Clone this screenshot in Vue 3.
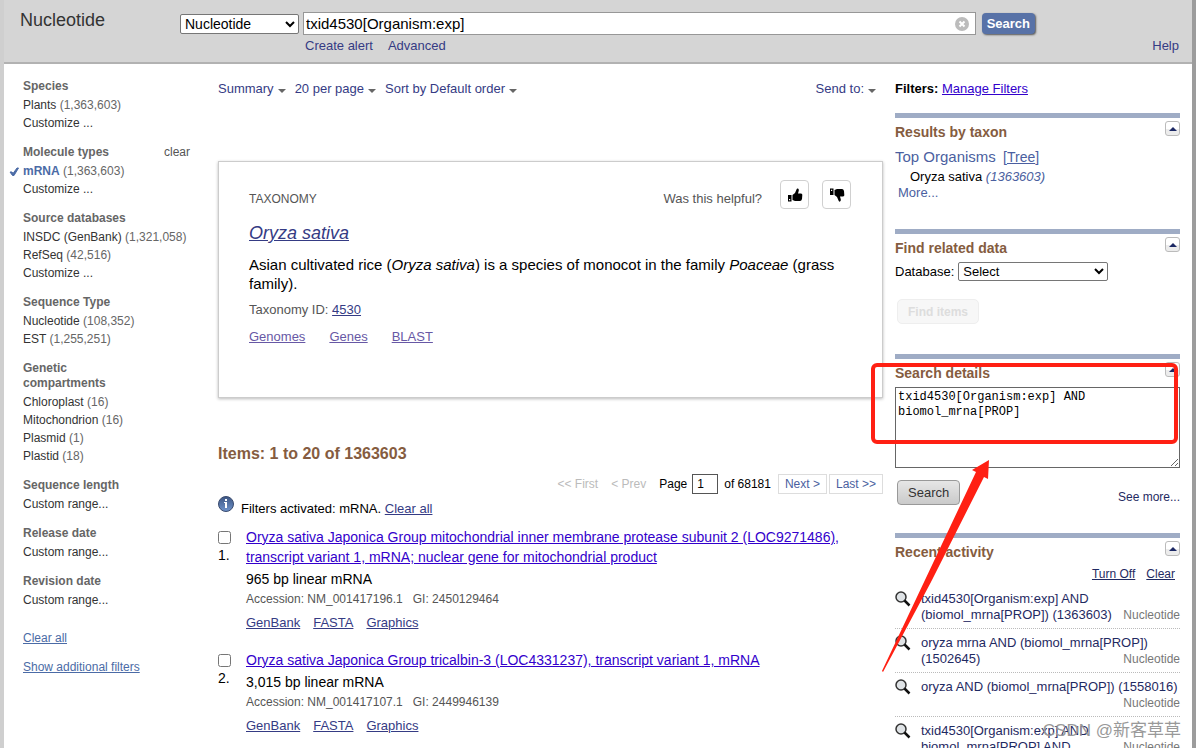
<template>
  <div class="page">
    <header class="top-bar">
      <h1 class="db-name">Nucleotide</h1>
      <form class="search-form" @submit.prevent>
        <div class="search-row">
          <select v-model="database" class="db-select" aria-label="Database">
            <option>Nucleotide</option>
            <option>Protein</option>
            <option>Gene</option>
          </select>
          <div class="term-box">
            <input v-model="term" class="term-input" type="text" aria-label="Search term" />
            <button class="term-clear" type="button" aria-label="Clear input" @click="term = ''">
              <svg viewBox="0 0 14 14" width="14" height="14">
                <circle cx="7" cy="7" r="7" fill="#bcbcbc" />
                <path d="M4.5 4.5l5 5M9.5 4.5l-5 5" stroke="#fff" stroke-width="2" />
              </svg>
            </button>
          </div>
          <button class="search-btn" type="submit">Search</button>
        </div>
        <nav class="search-links">
          <a href="#">Create alert</a>
          <a href="#">Advanced</a>
          <a href="#" class="help">Help</a>
        </nav>
      </form>
    </header>

    <div class="columns">
      <!-- filters -->
      <nav class="filters">
        <section v-for="group in filterGroups" :key="group.title" class="filter-group">
          <div class="filter-head">
            <h3>{{ group.title }}</h3>
            <a v-if="group.clear" href="#">clear</a>
          </div>
          <ul>
            <li v-for="item in group.items" :key="item.name" :class="{ selected: item.selected }">
              <svg v-if="item.selected" class="tick" viewBox="0 0 10 9" width="10" height="9">
                <path d="M1 5h2l1 1.500L8 1h1.500L5 8.500H3.500z" fill="#4b6ba6" stroke="#4b6ba6" />
              </svg>
              <a href="#">{{ item.name }}</a><span v-if="item.count"> ({{ item.count }})</span>
            </li>
          </ul>
        </section>
        <div class="filter-links">
          <a href="#">Clear all</a>
          <a href="#">Show additional filters</a>
        </div>
      </nav>

      <main class="content">
        <div class="display-bar">
          <a v-for="label in displayOptions" :key="label" href="#">{{ label }}<i class="caret"></i></a>
        </div>

        <article class="taxon-card">
          <div class="card-head">
            <span class="card-kind">TAXONOMY</span>
            <span class="helpful">Was this helpful?</span>
            <button class="thumb" type="button" aria-label="Yes, helpful">
              <svg viewBox="0 0 16 16" width="16" height="16">
                <path :d="thumbPath" fill-rule="evenodd" />
              </svg>
            </button>
            <button class="thumb" type="button" aria-label="No, not helpful">
              <svg class="down" viewBox="0 0 16 16" width="16" height="16">
                <path :d="thumbPath" fill-rule="evenodd" />
              </svg>
            </button>
          </div>
          <h2><a href="#"><i>Oryza sativa</i></a></h2>
          <p class="card-text">
            Asian cultivated rice (<i>Oryza sativa</i>) is a species of monocot in the family
            <i>Poaceae</i> (grass family).
          </p>
          <p class="card-id">Taxonomy ID: <a href="#">4530</a></p>
          <div class="card-links">
            <a href="#">Genomes</a>
            <a href="#">Genes</a>
            <a href="#">BLAST</a>
          </div>
        </article>

        <h2 class="result-count">Items: 1 to 20 of 1363603</h2>

        <div class="pager">
          <span class="off">&lt;&lt; First</span>
          <span class="off">&lt; Prev</span>
          <label for="page-no">Page</label>
          <input id="page-no" v-model="pageNo" type="text" />
          <span class="total">of 68181</span>
          <a href="#">Next &gt;</a>
          <a href="#">Last &gt;&gt;</a>
        </div>

        <div class="notice">
          <svg viewBox="0 0 16 16" width="16" height="16">
            <defs>
              <linearGradient id="info-fill" x1="0" y1="0" x2="0" y2="1">
                <stop offset="0" stop-color="#3d5683" />
                <stop offset="1" stop-color="#6f94cc" />
              </linearGradient>
            </defs>
            <circle cx="8" cy="8" r="7.500" fill="url(#info-fill)" stroke="#3a4b6e" />
            <path d="M7 3h2v2H7zM6 6h3v6H7V7H6z" fill="#fff" />
          </svg>
          <span>Filters activated: mRNA. <a href="#">Clear all</a></span>
        </div>

        <article v-for="(item, index) in results" :key="item.accession" class="result">
          <div class="result-pick">
            <input :id="'pick-' + index" type="checkbox" />
            <label :for="'pick-' + index">{{ index + 1 }}.</label>
          </div>
          <div class="result-body">
            <a class="result-title" href="#">{{ item.title }}</a>
            <p class="result-size">{{ item.size }}</p>
            <p class="result-ids">
              <span>Accession: {{ item.accession }}</span>
              <span>GI: {{ item.gi }}</span>
            </p>
            <div class="result-links">
              <a href="#">GenBank</a>
              <a href="#">FASTA</a>
              <a href="#">Graphics</a>
            </div>
          </div>
        </article>
      </main>

      <aside class="side">
        <p class="manage"><b>Filters:</b> <a href="#">Manage Filters</a></p>

        <section class="portlet taxon">
          <div class="portlet-head">
            <h3>Results by taxon</h3>
            <button class="toggle" type="button" aria-label="Collapse"></button>
          </div>
          <p class="organisms">Top Organisms <a href="#">[<u>Tree</u>]</a></p>
          <p class="organism">Oryza sativa <a href="#"><i>(1363603)</i></a></p>
          <a class="more" href="#">More...</a>
        </section>

        <section class="portlet related">
          <div class="portlet-head">
            <h3>Find related data</h3>
            <button class="toggle" type="button" aria-label="Collapse"></button>
          </div>
          <div class="related-row">
            <label for="related-db">Database:</label>
            <select id="related-db">
              <option>Select</option>
            </select>
          </div>
          <button class="find-btn" type="button" disabled>Find items</button>
        </section>

        <section class="portlet details">
          <div class="portlet-head">
            <h3>Search details</h3>
            <button class="toggle" type="button" aria-label="Collapse"></button>
          </div>
          <textarea v-model="query" aria-label="Search details"></textarea>
          <div class="details-row">
            <button class="details-btn" type="button">Search</button>
            <a href="#">See more...</a>
          </div>
          <!-- red marker: frame and arrow -->
          <svg class="marker" viewBox="0 0 310 320" width="310" height="320">
            <rect x="4" y="11" width="303" height="77" rx="4" fill="none" stroke="#ff2013" stroke-width="4" />
            <path d="M13 317L107 118L103 116L120 106L119 125L115 123L62 228L14 318z" fill="#ff2013" />
          </svg>
        </section>

        <section class="portlet recent">
          <div class="portlet-head">
            <h3>Recent activity</h3>
            <button class="toggle" type="button" aria-label="Collapse"></button>
          </div>
          <div class="recent-actions">
            <a href="#">Turn Off</a>
            <a href="#">Clear</a>
          </div>
          <ul>
            <li v-for="entry in activity" :key="entry">
              <svg viewBox="0 0 16 16" width="16" height="16">
                <circle cx="6" cy="6" r="5" fill="#dfe3e6" stroke="#333" stroke-width="1.500" />
                <path d="M9.500 9.500l5 5" stroke="#111" stroke-width="2.500" />
              </svg>
              <div class="entry">
                <span class="entry-db">Nucleotide</span>
                <a href="#">{{ entry }}</a>
              </div>
            </li>
          </ul>
        </section>
      </aside>
    </div>

    <div class="watermark">CSDN @新客草草</div>
  </div>
</template>

<script setup>
import { ref } from 'vue'

const database = ref('Nucleotide')
const term = ref('txid4530[Organism:exp]')
const pageNo = ref('1')
const query = ref('txid4530[Organism:exp] AND\nbiomol_mrna[PROP]')

const displayOptions = ['Summary', '20 per page', 'Sort by Default order', 'Send to:']

// cuff with a small button, then the hand
const thumbPath =
  'M1 8h3.500v6.500H1zM2 12v1.200h1.200V12zM5.500 8L8 6l1.500-3.500Q10 1 11 1.500t.800 2L11 6.500h3q1.500.3 1.300 1.500l-.3 4q-.5 2-2 2H8l-2.500-1z'

const filterGroups = [
  {
    title: 'Species',
    items: [{ name: 'Plants', count: '1,363,603' }, { name: 'Customize ...' }]
  },
  {
    title: 'Molecule types',
    clear: true,
    items: [{ name: 'mRNA', count: '1,363,603', selected: true }, { name: 'Customize ...' }]
  },
  {
    title: 'Source databases',
    items: [
      { name: 'INSDC (GenBank)', count: '1,321,058' },
      { name: 'RefSeq', count: '42,516' },
      { name: 'Customize ...' }
    ]
  },
  {
    title: 'Sequence Type',
    items: [{ name: 'Nucleotide', count: '108,352' }, { name: 'EST', count: '1,255,251' }]
  },
  {
    title: 'Genetic compartments',
    items: [
      { name: 'Chloroplast', count: '16' },
      { name: 'Mitochondrion', count: '16' },
      { name: 'Plasmid', count: '1' },
      { name: 'Plastid', count: '18' }
    ]
  },
  { title: 'Sequence length', items: [{ name: 'Custom range...' }] },
  { title: 'Release date', items: [{ name: 'Custom range...' }] },
  { title: 'Revision date', items: [{ name: 'Custom range...' }] }
]

const results = [
  {
    title:
      'Oryza sativa Japonica Group mitochondrial inner membrane protease subunit 2 (LOC9271486), transcript variant 1, mRNA; nuclear gene for mitochondrial product',
    size: '965 bp linear mRNA',
    accession: 'NM_001417196.1',
    gi: '2450129464'
  },
  {
    title: 'Oryza sativa Japonica Group tricalbin-3 (LOC4331237), transcript variant 1, mRNA',
    size: '3,015 bp linear mRNA',
    accession: 'NM_001417107.1',
    gi: '2449946139'
  }
]

const activity = [
  'txid4530[Organism:exp] AND (biomol_mrna[PROP]) (1363603)',
  'oryza mrna AND (biomol_mrna[PROP]) (1502645)',
  'oryza AND (biomol_mrna[PROP]) (1558016)',
  'txid4530[Organism:exp] AND biomol_mrna[PROP] AND'
]
</script>

<style>
body {
  margin: 0;
  background: #fff;
}
</style>

<style scoped>
.page {
  position: relative;
  box-sizing: border-box;
  height: 100vh;
  overflow: hidden;
  border-left: 4px solid #cfcfcf;
  border-right: 4px solid #9c9c9c;
  background: #fff;
  font-family: "Liberation Sans", Arial, "Noto Sans CJK SC", sans-serif;
  font-size: 13px;
  line-height: 16px;
  color: #000;
}

h1, h2, h3, p, ul {
  margin: 0;
  padding: 0;
}

ul {
  list-style: none;
}

a {
  color: #353b84;
}

button, input, select, textarea {
  font-family: inherit;
}

/* header */
.top-bar {
  display: flex;
  box-sizing: border-box;
  height: 64px;
  padding: 10px 12px 0 16px;
  border-bottom: 2px solid #b2b2b2;
  background: #d5d5d5;
}

.db-name {
  width: 160px;
  font-size: 18px;
  font-weight: normal;
  line-height: 20px;
  color: #333;
}

.search-form {
  flex: 1;
}

.search-row {
  display: flex;
  align-items: center;
  padding-top: 2px;
}

.db-select {
  width: 119px;
  height: 20px;
  margin-right: 4px;
  padding: 0;
  border: 1px solid #767676;
  border-radius: 2px;
  background: #fff;
  font-size: 14px;
}

.term-box {
  display: flex;
  flex: 1;
  align-items: center;
  height: 21px;
  margin-right: 6px;
  padding-right: 6px;
  border: 1px solid #979797;
  background: #fff;
}

.term-input {
  flex: 1;
  padding: 0 2px;
  border: 0;
  outline: 0;
  font-size: 15px;
}

.term-clear {
  display: flex;
  padding: 0;
  border: 0;
  background: none;
}

.search-btn {
  height: 21px;
  margin-right: 145px;
  padding: 0 5px;
  border: 0;
  border-radius: 4px;
  background: #5872a7;
  box-shadow: 1px 1px 2px #555;
  font-size: 13px;
  font-weight: bold;
  color: #fff;
}

.search-links {
  display: flex;
  gap: 15px;
  padding: 3px 1px 0 125px;
}

.search-links a {
  text-decoration: none;
}

.help {
  margin-left: auto;
}

.columns {
  display: grid;
  grid-template-columns: 202px minmax(0, 1fr) 285px;
  column-gap: 12px;
  padding: 15px 12px 0 0;
}

/* left column */
.filters {
  padding-left: 19px;
  font-size: 12px;
}

.filter-group {
  margin-bottom: 13px;
  color: #666;
}

.filter-head {
  display: flex;
  justify-content: space-between;
  padding-right: 16px;
  margin-bottom: 2px;
  line-height: 15px;
}

.filter-head h3 {
  max-width: 110px;
  font-size: 12px;
}

.filter-head a {
  color: #555;
  text-decoration: none;
}

.filter-group li {
  position: relative;
  line-height: 18px;
}

.filter-group li a {
  color: #333;
  text-decoration: none;
}

.filter-group li.selected a {
  font-weight: bold;
  color: #4b6ba6;
}

.tick {
  position: absolute;
  top: 5px;
  left: -14px;
}

.filter-links {
  display: flex;
  flex-direction: column;
  gap: 13px;
  align-items: flex-start;
  padding-top: 8px;
}

.filter-links a {
  color: #4b6ba6;
}

/* middle column */
.display-bar {
  display: flex;
  gap: 9px;
  padding: 2px 7px 0 0;
}

.display-bar a {
  text-decoration: none;
}

.display-bar a:last-child {
  margin-left: auto;
}

.caret {
  display: inline-block;
  margin-left: 4px;
  border: 4px solid transparent;
  border-top-color: #666;
  border-bottom: 0;
}

.taxon-card {
  box-sizing: border-box;
  min-height: 237px;
  margin-top: 64px;
  padding: 18px 31px 18px 30px;
  border: 1px solid #ccc;
  box-shadow: 0 1px 3px #bbb;
}

.card-head {
  display: flex;
  align-items: center;
  color: #555;
}

.card-kind {
  flex: 1;
  padding-top: 8px;
  font-size: 12px;
}

.helpful {
  margin-right: 18px;
  padding-top: 8px;
}

.thumb {
  display: flex;
  align-items: center;
  justify-content: center;
  width: 29px;
  height: 29px;
  padding: 0;
  border: 1px solid #d0d0d0;
  border-radius: 4px;
  background: #fff;
}

.thumb + .thumb {
  margin-left: 13px;
}

.down {
  transform: scaleY(-1);
}

.taxon-card h2 {
  margin-top: 13px;
  font-size: 18px;
  font-weight: normal;
  line-height: 22px;
}

.card-text {
  margin-top: 11px;
  font-size: 15px;
  line-height: 19px;
}

.card-id {
  margin-top: 9px;
  color: #555;
}

.card-links {
  display: flex;
  gap: 24px;
  margin-top: 11px;
}

.card-links a {
  color: #6758a5;
}

.result-count {
  margin-top: 46px;
  font-size: 16px;
  line-height: 20px;
  color: #855c40;
}

.pager {
  display: flex;
  align-items: center;
  justify-content: flex-end;
  margin-top: 10px;
  font-size: 12px;
}

.off {
  margin-right: 13px;
  color: #bbb;
}

.pager input {
  box-sizing: border-box;
  width: 26px;
  height: 20px;
  margin: 0 6px 0 5px;
  padding: 0 4px;
  border: 1px solid #555;
  font-size: 12px;
}

.total {
  margin-right: 7px;
}

.pager a {
  padding: 1px 6px;
  border: 1px solid #ddd;
  color: #4b5fa0;
  text-decoration: none;
}

.pager a + a {
  margin-left: 2px;
}

.notice {
  display: flex;
  gap: 7px;
  margin-top: 2px;
}

.notice span {
  padding-top: 5px;
}

.result {
  display: flex;
  margin-top: 10px;
}

.result-pick {
  display: flex;
  flex-direction: column;
  width: 28px;
  gap: 3px;
  padding-top: 4px;
  font-size: 14px;
}

.result-pick input {
  width: 13px;
  height: 13px;
  margin: 0;
}

.result-body {
  flex: 1;
  padding-bottom: 9px;
}

.result-title {
  display: block;
  font-size: 14px;
  line-height: 20px;
  color: #3300cc;
}

.result-size {
  margin-top: 3px;
  font-size: 14px;
  line-height: 18px;
}

.result-ids {
  display: flex;
  gap: 10px;
  margin-top: 3px;
  font-size: 12px;
  color: #555;
}

.result-links {
  display: flex;
  gap: 13px;
  margin-top: 8px;
}

/* right column */
.manage {
  padding: 2px 0 16px;
}

.manage a {
  color: #3300cc;
}

.portlet {
  position: relative;
  border-top: 5px solid #9facc5;
}

.portlet-head {
  display: flex;
  justify-content: space-between;
  padding-top: 3px;
}

.portlet-head h3 {
  padding-top: 3px;
  font-size: 14px;
  color: #855c40;
}

.toggle {
  display: flex;
  align-items: center;
  justify-content: center;
  width: 15px;
  height: 15px;
  padding: 0;
  border: 1px solid #bbb;
  border-radius: 3px;
  background: linear-gradient(#fff 50%, #ececec 50%);
}

.toggle::before {
  content: "";
  border: 4px solid transparent;
  border-top: 0;
  border-bottom-color: #1c2864;
}

.taxon {
  min-height: 111px;
  color: #4b5fa0;
}

.taxon a {
  color: #4b5fa0;
  text-decoration: none;
}

.organisms {
  margin-top: 8px;
  font-size: 15px;
  line-height: 18px;
}

.organisms a {
  margin-left: 3px;
  font-size: 14px;
}

.organism {
  padding: 3px 0 0 15px;
  color: #000;
}

.more {
  padding-left: 3px;
}

.related {
  min-height: 120px;
}

.related-row {
  display: flex;
  gap: 4px;
  align-items: center;
  margin-top: 6px;
}

.related-row select {
  width: 150px;
  height: 19px;
  padding: 0;
  border: 1px solid #767676;
  border-radius: 2px;
  background: #fff;
  font-size: 13px;
}

.find-btn {
  height: 25px;
  margin: 18px 0 0 2px;
  padding: 0 10px;
  border: 1px solid #eee;
  border-radius: 5px;
  background: #f7f7f7;
  font-size: 12px;
  font-weight: bold;
  color: #ddd;
}

.details {
  min-height: 174px;
}

textarea {
  display: block;
  box-sizing: border-box;
  width: 100%;
  height: 81px;
  margin-top: 6px;
  padding: 2px;
  border: 1px solid #666;
  font-family: "Liberation Mono", monospace;
  font-size: 12px;
  line-height: 15px;
}

.details-row {
  display: flex;
  align-items: center;
  justify-content: space-between;
  padding: 12px 0 0 2px;
}

.details-row a {
  padding-top: 8px;
  font-size: 12px;
  text-decoration: none;
  color: #1f2a62;
}

.details-btn {
  height: 25px;
  padding: 0 10px;
  border: 1px solid #999;
  border-radius: 4px;
  background: linear-gradient(#e6e6e6, #cacaca);
  font-size: 13px;
  color: #333;
}

.marker {
  position: absolute;
  top: -5px;
  left: -26px;
  z-index: 2;
  overflow: visible;
  pointer-events: none;
}

.recent-actions {
  display: flex;
  gap: 11px;
  justify-content: flex-end;
  padding: 6px 5px 9px 0;
  font-size: 12px;
}

.recent a {
  color: #1f2a62;
}

.recent li {
  display: flex;
  gap: 10px;
  padding-bottom: 5px;
  border-bottom: 1px dotted #bbb;
  margin-bottom: 6px;
}

.entry {
  position: relative;
  flex: 1;
  min-height: 32px;
}

.entry a {
  text-decoration: none;
}

.entry-db {
  position: absolute;
  right: 0;
  bottom: 0;
  font-size: 12px;
  color: #777;
}

.watermark {
  position: absolute;
  right: 11px;
  bottom: 5px;
  z-index: 3;
  font-size: 17px;
  line-height: 24px;
  color: #999;
}
</style>
